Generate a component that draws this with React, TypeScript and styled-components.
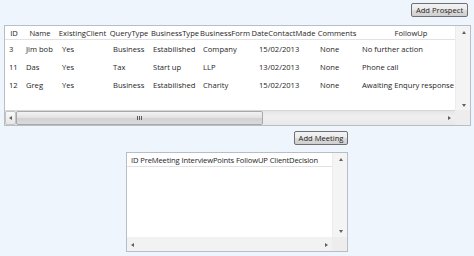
import React from "react";
import styled, { createGlobalStyle } from "styled-components";

const GlobalStyle = createGlobalStyle`
  html, body {
    margin: 0;
    padding: 0;
    background: #eef5fc;
  }
  body {
    font-family: "Open Sans", "Noto Sans", sans-serif;
    color: #1e1e1e;
  }
`;

interface ColumnInterface {
  label: string;
  width: number;
  pad: number;
}

const prospectColumns: ColumnInterface[] = [
  { label: "ID", width: 18, pad: 4 },
  { label: "Name", width: 34, pad: 3 },
  { label: "ExistingClient", width: 51, pad: 5 },
  { label: "QueryType", width: 42, pad: 5 },
  { label: "BusinessType", width: 50, pad: 3 },
  { label: "BusinessForm", width: 50, pad: 3 },
  { label: "DateContactMade", width: 67, pad: 9 },
  { label: "Comments", width: 40, pad: 3 },
  { label: "FollowUp", width: 108, pad: 5 }
];

const prospects: string[][] = [
  ["3", "Jim bob", "Yes", "Business", "Estabilished", "Company", "15/02/2013", "None", "No further action"],
  ["11", "Das", "Yes", "Tax", "Start up", "LLP", "13/02/2013", "None", "Phone call"],
  ["12", "Greg", "Yes", "Business", "Estabilished", "Charity", "15/02/2013", "None", "Awaiting Enqury response"]
];

const meetingColumns = ["ID", "PreMeeting", "InterviewPoints", "FollowUP", "ClientDecision"];

const Arrow: React.FC<{ dir: "up" | "down" | "left" | "right" }> = ({ dir }) => {
  const points = {
    up: "0,3 2,0 4,3",
    down: "0,0 4,0 2,3",
    left: "3,0 3,4 0,2",
    right: "0,0 0,4 3,2"
  }[dir];
  const vertical = dir === "up" || dir === "down";
  return (
    <svg width={vertical ? 4 : 3} height={vertical ? 3 : 4} viewBox={vertical ? "0 0 4 3" : "0 0 3 4"}>
      <polygon points={points} fill="#606060" />
    </svg>
  );
};

const App: React.FC = () => {
  const template = prospectColumns.map(c => `${c.width}px`).join(" ");

  return (
    <Page>
      <GlobalStyle />
      <TopBar>
        <Button $width={57}>Add Prospect</Button>
      </TopBar>

      <GridFrame $height={101}>
        <GridBody>
          <HeaderRow style={{ gridTemplateColumns: template }}>
            {prospectColumns.map(col => (
              <HeaderCell key={col.label}>{col.label}</HeaderCell>
            ))}
          </HeaderRow>
          {prospects.map((row, i) => (
            <DataRow key={i} style={{ gridTemplateColumns: template }}>
              {row.map((value, j) => (
                <DataCell key={j} $pad={prospectColumns[j].pad}>{value}</DataCell>
              ))}
            </DataRow>
          ))}
        </GridBody>
        <VScroll>
          <Arrow dir="up" />
          <Arrow dir="down" />
        </VScroll>
        <HScroll $height={14}>
          <ScrollButton><Arrow dir="left" /></ScrollButton>
          <Thumb $width={247}>
            <Grip>
              <span /><span /><span />
            </Grip>
          </Thumb>
          <Track />
          <ArrowSlot><Arrow dir="right" /></ArrowSlot>
        </HScroll>
        <Corner />
      </GridFrame>

      <MeetingSection>
        <MeetingBar>
          <Button $width={54}>Add Meeting</Button>
        </MeetingBar>
        <GridFrame $height={100} $inset>
          <GridBody>
            <MeetingHeader>
              {meetingColumns.map(label => (
                <MeetingHeaderCell key={label}>{label}</MeetingHeaderCell>
              ))}
            </MeetingHeader>
          </GridBody>
          <VScroll $bottom={4}>
            <Arrow dir="up" />
            <Arrow dir="down" />
          </VScroll>
          <HScroll $height={13} $plain>
            <ArrowSlot><Arrow dir="left" /></ArrowSlot>
            <Track />
            <ArrowSlot><Arrow dir="right" /></ArrowSlot>
          </HScroll>
          <Corner />
        </GridFrame>
      </MeetingSection>
    </Page>
  );
};

const Page = styled.div`
  width: 474px;
  height: 256px;
  display: flex;
  flex-direction: column;
  overflow: hidden;
  font-size: 7.6px;
`;

const TopBar = styled.div`
  display: flex;
  justify-content: flex-end;
  padding: 3px 6px 0 0;
`;

const Button = styled.button<{ $width: number }>`
  width: ${p => p.$width}px;
  height: 14px;
  padding: 0;
  border: 1px solid #707070;
  border-radius: 2px;
  background: linear-gradient(#f3f3f3 0%, #ebebeb 50%, #dddddd 51%, #cfcfcf 100%);
  font-family: inherit;
  font-size: 7.6px;
  color: #1e1e1e;
  line-height: 12px;
  white-space: nowrap;
`;

const GridFrame = styled.div<{ $height: number; $inset?: boolean }>`
  box-sizing: border-box;
  height: ${p => p.$height}px;
  margin: ${p => (p.$inset ? "0" : "8px 3px 0 4px")};
  border: 1px solid #b7bec6;
  background: #ffffff;
  display: grid;
  grid-template-columns: 1fr 15px;
  grid-template-rows: 1fr auto;
  overflow: hidden;
`;

const GridBody = styled.div`
  overflow: hidden;
  min-width: 0;
`;

const HeaderRow = styled.div`
  display: grid;
  height: 13px;
  border-bottom: 1px solid #e2e2e2;
  white-space: nowrap;
`;

const HeaderCell = styled.div`
  display: flex;
  align-items: center;
  justify-content: center;
  overflow: visible;
`;

const DataRow = styled.div`
  display: grid;
  height: 18px;
  white-space: nowrap;
`;

const DataCell = styled.div<{ $pad: number }>`
  display: flex;
  align-items: center;
  padding-left: ${p => p.$pad}px;
  overflow: visible;
`;

const VScroll = styled.div<{ $bottom?: number }>`
  display: flex;
  flex-direction: column;
  align-items: center;
  justify-content: space-between;
  padding: 5px 0 ${p => p.$bottom ?? 3}px 1px;
  background: #f4f4f4;
  border-left: 1px solid #ececec;
`;

const HScroll = styled.div<{ $height: number; $plain?: boolean }>`
  height: ${p => p.$height}px;
  display: flex;
  align-items: stretch;
  background: ${p => (p.$plain ? "#f2f2f2" : "linear-gradient(#e4e4e4, #f0f0f0 40%, #e8e8e8)")};
  border-top: 1px solid ${p => (p.$plain ? "#f2f2f2" : "#d6d6d6")};
`;

const ScrollButton = styled.div`
  width: 11px;
  display: flex;
  align-items: center;
  justify-content: center;
  border: 1px solid #c4c4c4;
  border-radius: 2px;
  background: linear-gradient(#fafafa, #e6e6e6);
  box-sizing: border-box;
`;

const ArrowSlot = styled.div`
  width: 11px;
  display: flex;
  align-items: center;
  justify-content: center;
`;

const Thumb = styled.div<{ $width: number }>`
  width: ${p => p.$width}px;
  box-sizing: border-box;
  border: 1px solid #a9a9a9;
  border-radius: 2px;
  background: linear-gradient(#f2f2f2 0%, #e2e2e2 50%, #d2d2d2 51%, #dadada 100%);
  display: flex;
  align-items: center;
  justify-content: center;
`;

const Grip = styled.div`
  display: flex;
  gap: 1px;
  span {
    width: 1px;
    height: 4px;
    background: #5a5a5a;
  }
`;

const Track = styled.div`
  flex: 1;
`;

const Corner = styled.div`
  background: #ededed;
`;

const MeetingSection = styled.div`
  align-self: center;
  width: 222px;
  display: flex;
  flex-direction: column;
`;

const MeetingBar = styled.div`
  display: flex;
  justify-content: flex-end;
  padding: 5px 0 7px;
`;

const MeetingHeader = styled.div`
  display: flex;
  gap: 2px;
  height: 13px;
  padding-left: 4px;
  border-bottom: 1px solid #e2e2e2;
  white-space: nowrap;
  letter-spacing: -0.15px;
`;

const MeetingHeaderCell = styled.div`
  display: flex;
  align-items: center;
`;

export default App;
